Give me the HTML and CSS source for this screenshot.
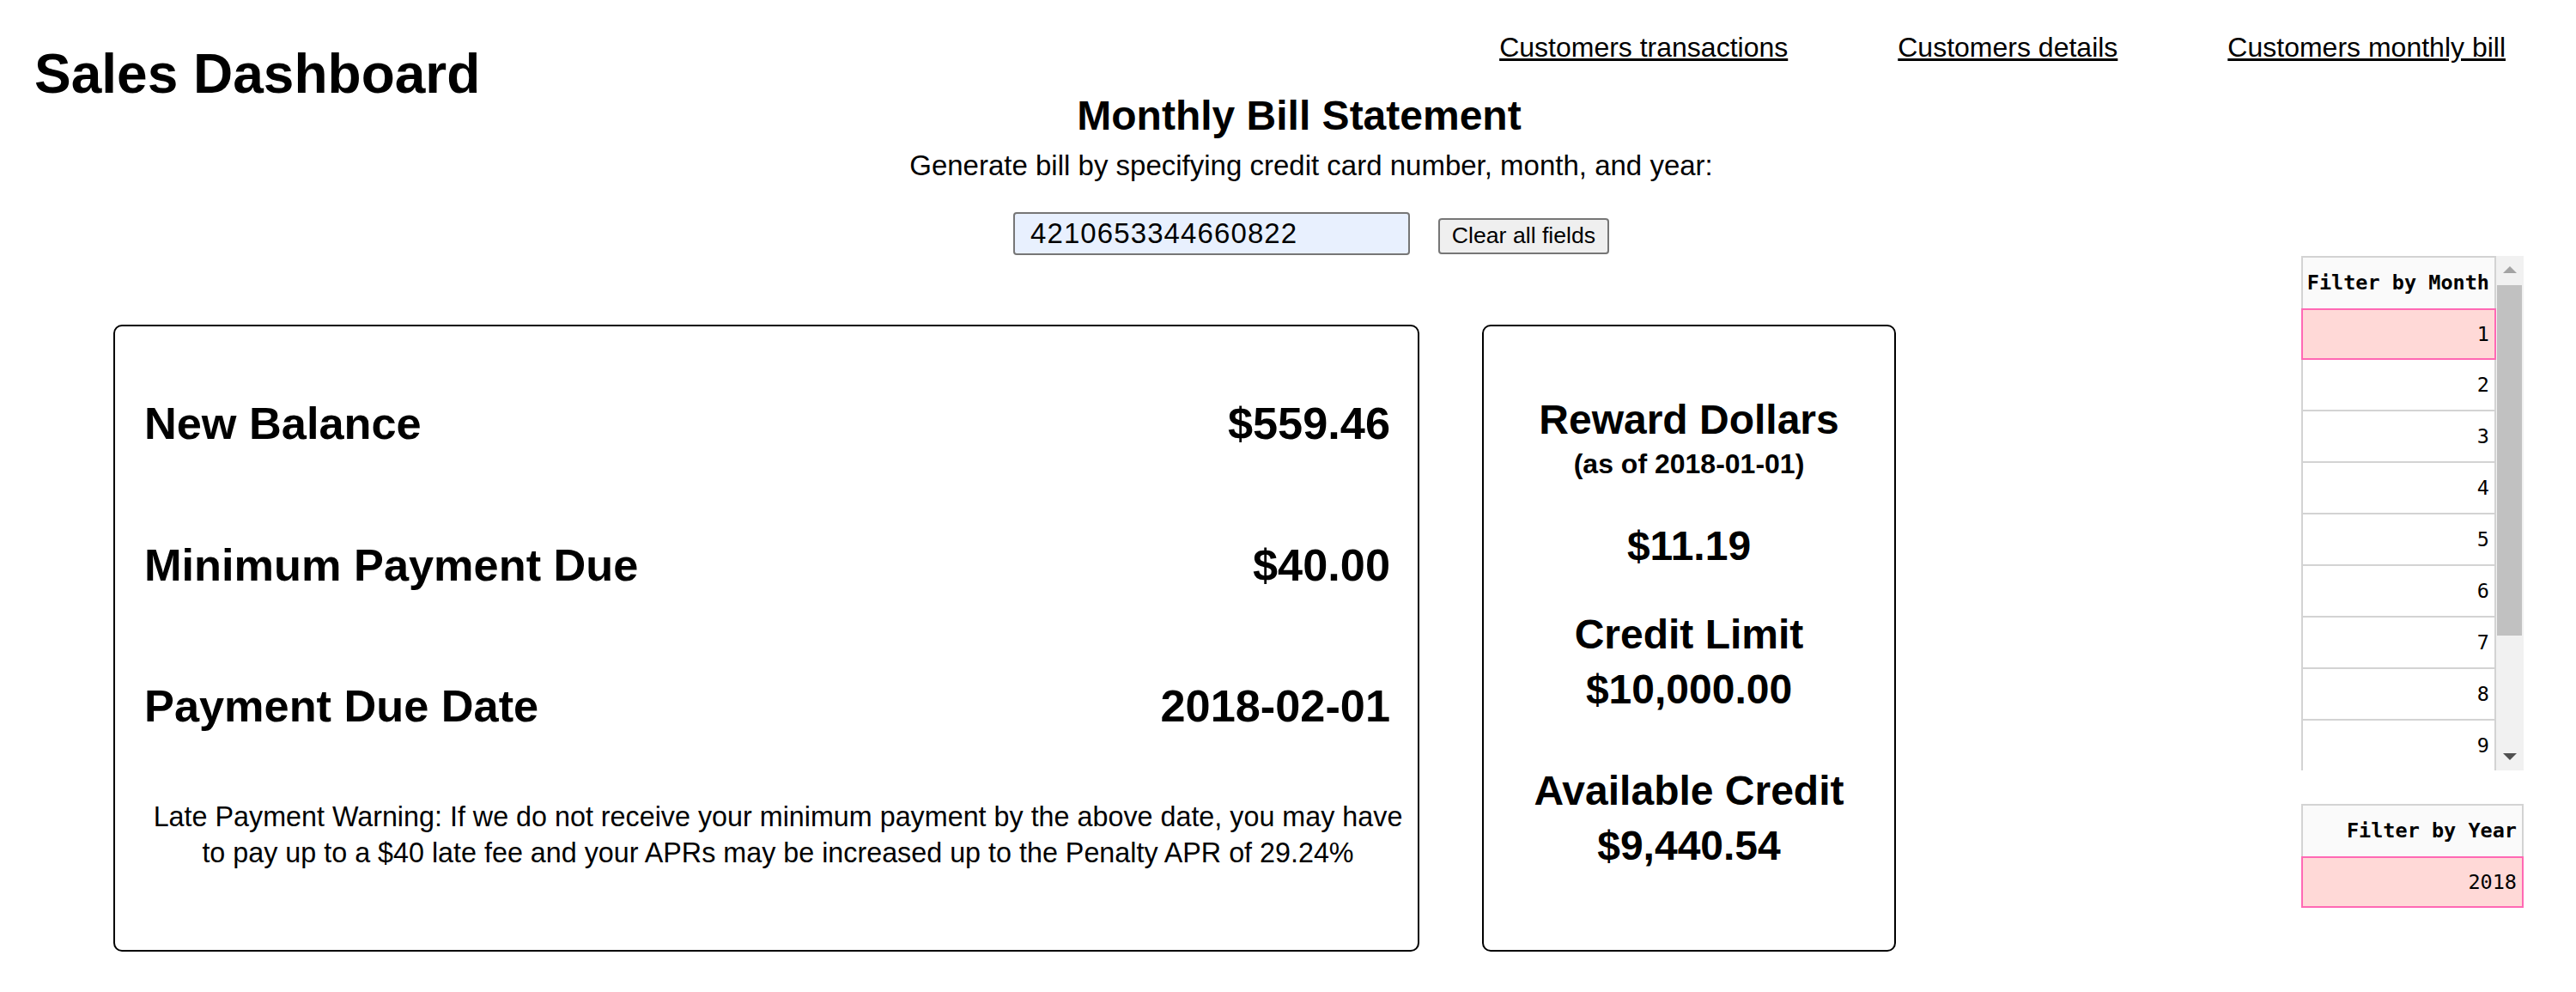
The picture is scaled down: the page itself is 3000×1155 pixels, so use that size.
FILE: index.html
```html
<!DOCTYPE html>
<html lang="en">
<head>
<meta charset="utf-8">
<title>Sales Dashboard</title>
<link rel="stylesheet" href="styles.css">
</head>
<body>
<header class="topbar">
  <h1 class="brand">Sales Dashboard</h1>
  <nav class="nav">
    <a href="#">Customers transactions</a>
    <a href="#">Customers details</a>
    <a href="#">Customers monthly bill</a>
  </nav>
</header>

<section class="intro">
  <h2 class="intro-title">Monthly Bill Statement</h2>
  <p class="intro-text">Generate bill by specifying credit card number, month, and year:</p>
  <div class="intro-controls">
    <input class="card-input" type="text" value="4210653344660822">
    <button class="clear-btn" type="button">Clear all fields</button>
  </div>
</section>

<main class="workspace">
  <div class="cards">
    <section class="bill-card">
      <div class="bill-rows">
        <div class="bill-row"><span>New Balance</span><span>$559.46</span></div>
        <div class="bill-row"><span>Minimum Payment Due</span><span>$40.00</span></div>
        <div class="bill-row"><span>Payment Due Date</span><span>2018-02-01</span></div>
      </div>
      <p class="warning">Late Payment Warning: If we do not receive your minimum payment by the above date, you may have to pay up to a $40 late fee and your APRs may be increased up to the Penalty APR of 29.24%</p>
    </section>

    <section class="credit-card">
      <div class="cc-title">Reward Dollars</div>
      <div class="cc-sub">(as of 2018-01-01)</div>
      <div class="cc-value cc-reward">$11.19</div>
      <div class="cc-title cc-gap">Credit Limit</div>
      <div class="cc-value">$10,000.00</div>
      <div class="cc-title cc-gap2">Available Credit</div>
      <div class="cc-value">$9,440.54</div>
    </section>
  </div>

  <aside class="filters">
    <div class="month-filter">
      <div class="ft-grid">
        <div class="ft-cell ft-head">Filter by Month</div>
        <div class="ft-cell ft-selected">1</div>
        <div class="ft-cell">2</div>
        <div class="ft-cell">3</div>
        <div class="ft-cell">4</div>
        <div class="ft-cell">5</div>
        <div class="ft-cell">6</div>
        <div class="ft-cell">7</div>
        <div class="ft-cell">8</div>
        <div class="ft-cell">9</div>
      </div>
      <div class="scrollbar">
        <div class="sb-btn"><span class="sb-arrow-up"></span></div>
        <div class="sb-thumb"></div>
        <div class="sb-rest"></div>
        <div class="sb-btn"><span class="sb-arrow-down"></span></div>
      </div>
    </div>

    <div class="year-filter">
      <div class="ft-cell ft-head">Filter by Year</div>
      <div class="ft-cell ft-selected">2018</div>
    </div>
  </aside>
</main>
</body>
</html>
```

FILE: styles.css
```css
html, body {
  margin: 0;
  padding: 0;
  background: #ffffff;
}

body {
  width: 3000px;
  font-family: "Liberation Sans", Arial, sans-serif;
  color: #000000;
}

/* ---------- top bar ---------- */
.topbar {
  display: flex;
  justify-content: space-between;
  align-items: flex-start;
  height: 107px;
}

.brand {
  margin: 49px 0 0 40px;
  font-size: 64px;
  font-weight: bold;
  line-height: normal;
}

.nav {
  display: flex;
  gap: 128px;
  padding: 37px 82px 0 0;
}

.nav a {
  font-size: 32px;
  color: #000000;
  text-decoration: underline;
}

/* ---------- intro ---------- */
.intro {
  padding-left: 54px;
  text-align: center;
}

.intro-title {
  margin: 0;
  padding-right: 28px;
  font-size: 48px;
  font-weight: bold;
  line-height: normal;
}

.intro-text {
  margin: 13px 0 0;
  font-size: 33px;
  line-height: 36.8px;
}

.intro-controls {
  display: flex;
  justify-content: center;
  align-items: flex-start;
  gap: 33px;
  margin-top: 35px;
}

.card-input {
  box-sizing: border-box;
  width: 462px;
  height: 50px;
  margin: 0;
  padding: 0 18px;
  border: 2px solid #767676;
  border-radius: 4px;
  background: #e8f0fe;
  font-family: "Liberation Sans", Arial, sans-serif;
  font-size: 33px;
  letter-spacing: 1.1px;
  color: #000000;
  outline: none;
}

.clear-btn {
  box-sizing: border-box;
  width: 199px;
  height: 42px;
  margin: 7px 0 0;
  padding: 0;
  border: 2px solid #767676;
  border-radius: 4px;
  background: #efefef;
  font-family: "Liberation Sans", Arial, sans-serif;
  font-size: 26.67px;
  color: #000000;
}

/* ---------- workspace ---------- */
.workspace {
  display: flex;
  align-items: flex-start;
  margin-top: 1px;
  padding: 0 61px 0 132px;
}

.cards {
  display: flex;
  gap: 73px;
  padding-top: 80px;
}

.bill-card,
.credit-card {
  box-sizing: border-box;
  height: 730px;
  border: 2px solid #000000;
  border-radius: 10px;
}

.bill-card {
  width: 1521px;
}

.bill-rows {
  display: flex;
  flex-direction: column;
  gap: 105px;
  padding: 84px 32px 0 34px;
}

.bill-row {
  display: flex;
  justify-content: space-between;
  font-size: 52.3px;
  font-weight: bold;
  line-height: 59.75px;
}

.warning {
  margin: 77px 0 0;
  padding: 0 17px 0 44px;
  text-align: center;
  font-size: 32.3px;
  line-height: 42px;
}

.credit-card {
  width: 482px;
  padding-top: 81px;
  text-align: center;
  font-weight: bold;
}

.cc-title,
.cc-value {
  font-size: 48px;
  line-height: normal;
}

.cc-sub {
  margin-top: 6px;
  font-size: 32px;
  line-height: normal;
}

.cc-gap {
  margin-top: 48px;
}

.cc-value {
  margin-top: 9px;
}

.cc-reward.cc-value {
  margin-top: 49px;
}

.cc-gap2 {
  margin-top: 63px;
}

/* ---------- filters ---------- */
.filters {
  margin-left: auto;
  width: 259px;
}

.month-filter {
  display: flex;
  height: 599px;
  overflow: hidden;
}

.ft-grid {
  width: 227px;
  flex: none;
}

.ft-cell {
  box-sizing: border-box;
  height: 60px;
  padding-right: 6px;
  border: 2px solid #d3d3d3;
  border-top: none;
  background: #ffffff;
  text-align: right;
  font-family: "DejaVu Sans Mono", "Liberation Mono", monospace;
  font-size: 23.5px;
  line-height: 58px;
  color: #000000;
}

.ft-head {
  height: 61px;
  border-top: 2px solid #d3d3d3;
  border-bottom: none;
  background: #fafafa;
  font-weight: bold;
}

.ft-selected {
  border: 2px solid hotpink;
  background: #ffd9d7;
  line-height: 56px;
}

.scrollbar {
  display: flex;
  flex-direction: column;
  width: 32px;
  height: 599px;
  background: #f1f1f1;
}

.sb-btn {
  display: flex;
  align-items: center;
  justify-content: center;
  height: 32px;
  flex: none;
}

.sb-arrow-up {
  width: 0;
  height: 0;
  border-left: 8px solid transparent;
  border-right: 8px solid transparent;
  border-bottom: 8px solid #a3a3a3;
}

.sb-arrow-down {
  width: 0;
  height: 0;
  border-left: 8px solid transparent;
  border-right: 8px solid transparent;
  border-top: 8px solid #505050;
}

.sb-thumb {
  height: 408px;
  margin: 2px 2px 0 1px;
  background: #c1c1c1;
  flex: none;
}

.sb-rest {
  flex: 1;
}

.year-filter {
  margin-top: 39px;
}

.year-filter .ft-cell {
  width: 259px;
}
```
